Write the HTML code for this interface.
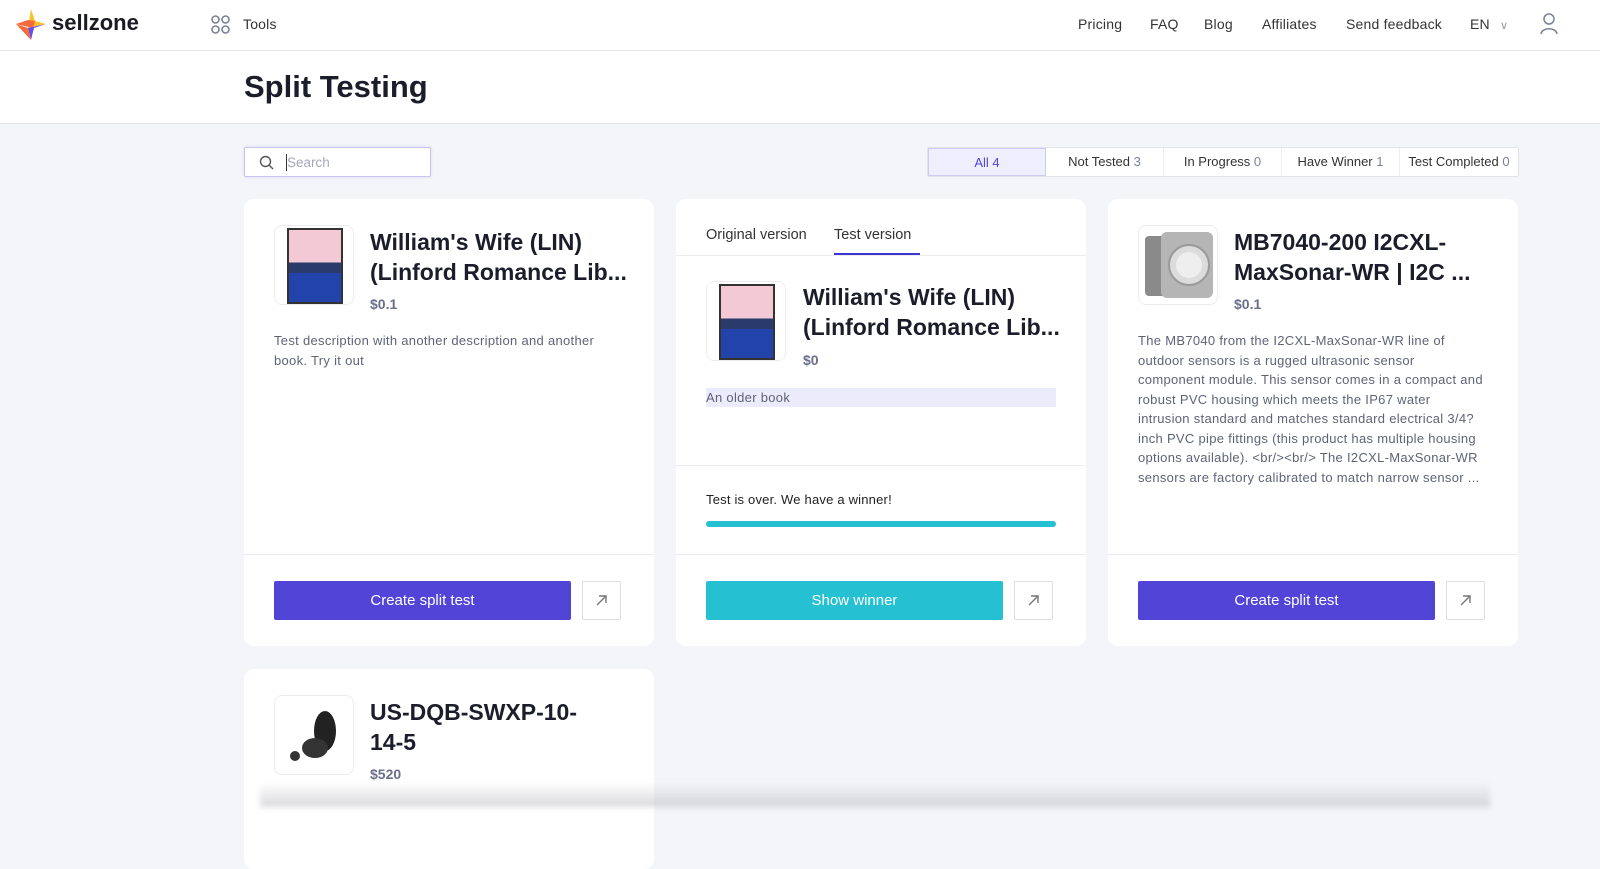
<!DOCTYPE html>
<html><head><style>
*{box-sizing:border-box;margin:0;padding:0}
body{width:1600px;height:807px;overflow:hidden;background:#f4f5f8;font-family:"Liberation Sans",sans-serif;color:#1c1d2b;position:relative}
.hdr{position:absolute;left:0;top:0;width:1600px;height:51px;background:#fff;border-bottom:1px solid #e6e6f0}
.title{position:absolute;left:0;top:51px;width:1600px;height:73px;background:#fff;border-bottom:1px solid #e3e4ea}
.title h1{position:absolute;left:244px;top:18px;font-size:31px;font-weight:bold;color:#1c1d2b}
.nav{position:absolute;top:16px;font-size:14px;color:#333;letter-spacing:0.2px}
.card{position:absolute;background:#fff;border-radius:10px;width:410px}
.img{position:absolute;width:80px;height:80px;border:1px solid #ececf4;border-radius:8px;overflow:hidden}
.t{position:absolute;font-size:23px;font-weight:bold;line-height:30px;color:#1c1d2b;width:260px}
.p{position:absolute;font-size:14px;color:#6a6f8a;font-weight:bold}
.d{position:absolute;font-size:13px;line-height:19.5px;color:#5f6378;width:345px;letter-spacing:0.3px}
.hr{position:absolute;left:0;width:410px;height:1px;background:#ececf2}
.btn{position:absolute;height:39px;width:297px;border-radius:2px;color:#fff;font-size:15px;text-align:center;line-height:39px}
.arr{position:absolute;width:39px;height:39px;border:1px solid #dcdde5;border-radius:2px}
.book{width:100%;height:100%;background:#fff;position:relative}
.book div{position:absolute;left:12px;top:2px;width:56px;height:76px;background:linear-gradient(#f3c9d6 0 45%,#2a3a6a 45% 60%,#2244aa 60%);border:2px solid #333}
</style></head><body>
<div class="hdr">
 <svg style="position:absolute;left:16px;top:9px" width="30" height="31" viewBox="0 0 30 31"><path d="M15 0 L19 12 L30 15 L12 19 Z" fill="#f8c22a"/><path d="M0 15 L12 11 L19 12 L17 19 Z" fill="#f66a3c"/><path d="M12 19 L30 15 L18 19 L15 31 Z" fill="#6550e8"/><path d="M0 15 L12 19 L15 31 Z" fill="#f66a3c"/></svg>
 <div style="position:absolute;left:52px;top:10px;font-size:22px;font-weight:bold;color:#1a1a22">sellzone</div>
 <svg style="position:absolute;left:211px;top:15px" width="19" height="19" viewBox="0 0 19 19" fill="none" stroke="#7a8095" stroke-width="1.6"><circle cx="4.5" cy="4.5" r="3.5"/><circle cx="14.5" cy="4.5" r="3.5"/><circle cx="4.5" cy="14.5" r="3.5"/><circle cx="14.5" cy="14.5" r="3.5"/></svg>
 <div class="nav" style="left:243px">Tools</div>
 <div class="nav" style="left:1078px">Pricing</div>
 <div class="nav" style="left:1150px">FAQ</div>
 <div class="nav" style="left:1204px">Blog</div>
 <div class="nav" style="left:1262px">Affiliates</div>
 <div class="nav" style="left:1346px">Send feedback</div>
 <div class="nav" style="left:1470px">EN <span style="color:#999;font-size:11px;margin-left:6px">&#8744;</span></div>
 <svg style="position:absolute;left:1540px;top:13px" width="18" height="22" viewBox="0 0 18 22" fill="none" stroke="#7a8095" stroke-width="1.5"><circle cx="9" cy="6" r="5"/><path d="M1 21 C2 14 16 14 17 21"/></svg>
</div>
<div class="title"><h1>Split Testing</h1></div>
<div style="position:absolute;left:244px;top:147px;width:187px;height:30px;background:#fff;border:1px solid #c9c2f2;border-radius:2px;box-shadow:0 0 3px #ddd8fa">
 <svg style="position:absolute;left:14px;top:7px" width="15" height="15" viewBox="0 0 15 15" fill="none" stroke="#555" stroke-width="1.4"><circle cx="6.5" cy="6.5" r="5"/><path d="M10 10 L14 14"/></svg>
 <div style="position:absolute;left:41px;top:6px;width:1px;height:17px;background:#333"></div>
 <div style="position:absolute;left:42px;top:7px;font-size:13.5px;color:#a5a8b8">Search</div>
</div>
<div style="position:absolute;left:927px;top:147px;height:30px;display:flex;font-size:13px;background:#fff;border:1px solid #e3e4ea;border-radius:2px">
 <div style="width:118px;text-align:center;line-height:28px;background:#efeefc;border:1px solid #cfcaf3;color:#5046d6">All 4</div>
 <div style="width:118px;text-align:center;line-height:28px;border-right:1px solid #eceef2;color:#333">Not Tested <span style="color:#7a7fa0">3</span></div>
 <div style="width:118px;text-align:center;line-height:28px;border-right:1px solid #eceef2;color:#333">In Progress <span style="color:#7a7fa0">0</span></div>
 <div style="width:118px;text-align:center;line-height:28px;border-right:1px solid #eceef2;color:#333">Have Winner <span style="color:#7a7fa0">1</span></div>
 <div style="width:118px;text-align:center;line-height:28px;color:#333">Test Completed <span style="color:#7a7fa0">0</span></div>
</div>

<div class="card" style="left:244px;top:199px;height:447px">
 <div class="img" style="left:30px;top:26px"><div class="book"><div></div></div></div>
 <div class="t" style="left:126px;top:28px">William's Wife (LIN) (Linford Romance Lib...</div>
 <div class="p" style="left:126px;top:97px">$0.1</div>
 <div class="d" style="left:30px;top:132px">Test description with another description and another book. Try it out</div>
 <div class="hr" style="top:355px"></div>
 <div class="btn" style="left:30px;top:382px;background:#5144d6">Create split test</div>
 <div class="arr" style="left:338px;top:382px"><svg width="37" height="37" viewBox="0 0 37 37" fill="none" stroke="#777" stroke-width="1.4"><path d="M14 23 L23 14 M16 14 H23 V21"/></svg></div>
</div>

<div class="card" style="left:676px;top:199px;height:447px">
 <div style="position:absolute;left:30px;top:28px;font-size:14.5px;color:#333">Original version</div>
 <div style="position:absolute;left:158px;top:28px;font-size:14.5px;color:#333">Test version</div>
 <div style="position:absolute;left:158px;top:54px;width:86px;height:2px;background:#3b36d0"></div>
 <div class="hr" style="top:56px"></div>
 <div class="img" style="left:30px;top:82px"><div class="book"><div></div></div></div>
 <div class="t" style="left:127px;top:83px">William's Wife (LIN) (Linford Romance Lib...</div>
 <div class="p" style="left:127px;top:153px">$0</div>
 <div style="position:absolute;left:30px;top:189px;width:350px;height:19px;background:#ecebfb;font-size:13px;color:#5f6378;line-height:19px;letter-spacing:0.3px">An older book</div>
 <div class="hr" style="top:266px"></div>
 <div style="position:absolute;left:30px;top:293px;font-size:13px;color:#222;letter-spacing:0.2px">Test is over. We have a winner!</div>
 <div style="position:absolute;left:30px;top:322px;width:350px;height:6px;border-radius:3px;background:#25c0d1"></div>
 <div class="hr" style="top:355px"></div>
 <div class="btn" style="left:30px;top:382px;background:#25c0d1">Show winner</div>
 <div class="arr" style="left:338px;top:382px"><svg width="37" height="37" viewBox="0 0 37 37" fill="none" stroke="#777" stroke-width="1.4"><path d="M14 23 L23 14 M16 14 H23 V21"/></svg></div>
</div>

<div class="card" style="left:1108px;top:199px;height:447px">
 <div class="img" style="left:30px;top:26px;background:#fff"><svg width="80" height="80" viewBox="0 0 80 80"><rect x="6" y="10" width="22" height="60" rx="4" fill="#8a8a8a"/><rect x="22" y="6" width="52" height="66" rx="6" fill="#b5b5b5"/><circle cx="50" cy="39" r="20" fill="#dcdcdc" stroke="#999" stroke-width="2"/><circle cx="50" cy="39" r="13" fill="#eee"/></svg></div>
 <div class="t" style="left:126px;top:28px">MB7040-200 I2CXL-MaxSonar-WR | I2C ...</div>
 <div class="p" style="left:126px;top:97px">$0.1</div>
 <div class="d" style="left:30px;top:132px">The MB7040 from the I2CXL-MaxSonar-WR line of outdoor sensors is a rugged ultrasonic sensor component module. This sensor comes in a compact and robust PVC housing which meets the IP67 water intrusion standard and matches standard electrical 3/4? inch PVC pipe fittings (this product has multiple housing options available). &lt;br/&gt;&lt;br/&gt; The I2CXL-MaxSonar-WR sensors are factory calibrated to match narrow sensor ...</div>
 <div class="hr" style="top:355px"></div>
 <div class="btn" style="left:30px;top:382px;background:#5144d6">Create split test</div>
 <div class="arr" style="left:338px;top:382px"><svg width="37" height="37" viewBox="0 0 37 37" fill="none" stroke="#777" stroke-width="1.4"><path d="M14 23 L23 14 M16 14 H23 V21"/></svg></div>
</div>

<div class="card" style="left:244px;top:669px;height:200px">
 <div class="img" style="left:30px;top:26px"><svg width="80" height="80" viewBox="0 0 80 80"><ellipse cx="50" cy="35" rx="11" ry="20" fill="#222"/><ellipse cx="40" cy="52" rx="13" ry="10" fill="#333"/><circle cx="20" cy="60" r="5" fill="#333"/></svg></div>
 <div class="t" style="left:126px;top:28px">US-DQB-SWXP-10-<br>14-5</div>
 <div class="p" style="left:126px;top:97px">$520</div>
</div>
<div style="position:absolute;left:260px;top:782px;width:1230px;height:25px;background:linear-gradient(rgba(200,200,205,0),rgba(180,180,186,0.5));filter:blur(3px)"></div>
</body></html>
